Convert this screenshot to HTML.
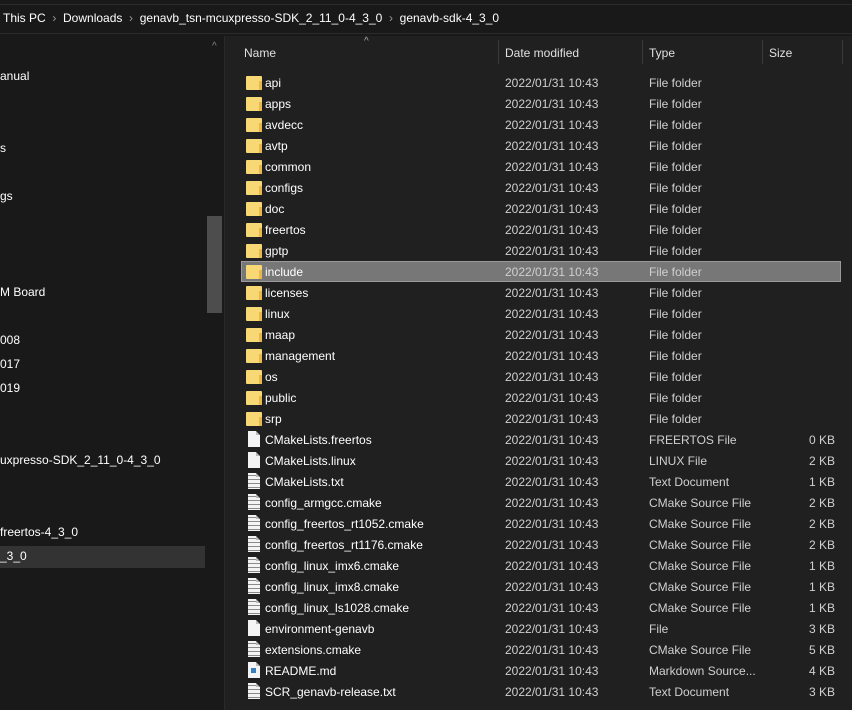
<!DOCTYPE html>
<html><head><style>
*{margin:0;padding:0;box-sizing:border-box}
body{width:852px;height:710px;background:#202020;font-family:"Liberation Sans",sans-serif;font-size:12px;color:#fff;position:relative;overflow:hidden}
.a{position:absolute;white-space:nowrap}
#top{left:0;top:0;width:852px;height:36px;background:#191919;border-top:1px solid #191919}
#topline{left:0;top:4px;width:852px;height:1px;background:#2b2b2b}
#botline{left:0;top:33px;width:852px;height:1px;background:#2b2b2b}
#nav{left:0;top:36px;width:224px;height:674px;background:#191919}
.n{left:0;font-size:12px;color:#fff}
.r{position:absolute;left:241px;width:600px;height:21px}
.r span{position:absolute;top:4px;white-space:nowrap}
.nm{left:24px;color:#fff}
.dt{left:264px;color:#d0d0d0}
.ty{left:408px;color:#d0d0d0}
.sz{right:6px;color:#d0d0d0}
.fd{position:absolute;left:5px;top:4px;width:16px;height:14px;background:#f8d775;border-radius:1px}
.fd:after{content:"";position:absolute;right:0;bottom:0;width:3px;height:9px;background:#e8b94a}
.fl{position:absolute;left:7px;top:2px;width:12px;height:16px;background:#f4f4f4}
.fl:after{content:"";position:absolute;right:0;top:0;border-style:solid;border-width:0 4px 4px 0;border-color:#202020 #202020 #bbb #bbb}
.tx{background:repeating-linear-gradient(#f4f4f4 0 2px,#8a8a8a 2px 3px,#f4f4f4 3px 4px)}
.hd{position:absolute;top:46px;color:#e0e0e0}
.sep{position:absolute;top:40px;width:1px;height:24px;background:#3a3a3a}
</style></head><body>
<div id="top" class="a"></div>
<div id="topline" class="a"></div>
<div id="botline" class="a"></div>
<div class="a" style="left:3px;top:11px;color:#fff;font-size:12px">This PC &nbsp;<span style="color:#999">›</span>&nbsp; Downloads &nbsp;<span style="color:#999">›</span>&nbsp; genavb_tsn-mcuxpresso-SDK_2_11_0-4_3_0 &nbsp;<span style="color:#999">›</span>&nbsp; genavb-sdk-4_3_0</div>
<div id="nav" class="a"></div>
<div class="a" style="left:224px;top:36px;width:1px;height:674px;background:#2a2a2a"></div>
<div class="a" style="left:212px;top:41px;color:#888;font-size:10px">^</div>
<div class="a" style="left:207px;top:216px;width:15px;height:97px;background:#4d4d4d"></div>
<div class="a" style="left:0;top:546px;width:205px;height:22px;background:#333"></div>
<div class="a n" style="top:69px">anual</div>
<div class="a n" style="top:141px">s</div>
<div class="a n" style="top:189px">gs</div>
<div class="a n" style="top:285px">M Board</div>
<div class="a n" style="top:333px">008</div>
<div class="a n" style="top:357px">017</div>
<div class="a n" style="top:381px">019</div>
<div class="a n" style="top:453px">uxpresso-SDK_2_11_0-4_3_0</div>
<div class="a n" style="top:525px">freertos-4_3_0</div>
<div class="a n" style="top:549px">_3_0</div>

<div class="a" style="left:364px;top:36px;color:#aaa;font-size:10px">^</div>
<div class="hd" style="left:244px">Name</div>
<div class="sep" style="left:498px"></div>
<div class="hd" style="left:505px">Date modified</div>
<div class="sep" style="left:642px"></div>
<div class="hd" style="left:649px">Type</div>
<div class="sep" style="left:762px"></div>
<div class="hd" style="left:769px">Size</div>
<div class="sep" style="left:842px"></div>

<div class="r" style="top:72px"><div class="fd"></div><span class="nm">api</span><span class="dt">2022/01/31 10:43</span><span class="ty">File folder</span></div>
<div class="r" style="top:93px"><div class="fd"></div><span class="nm">apps</span><span class="dt">2022/01/31 10:43</span><span class="ty">File folder</span></div>
<div class="r" style="top:114px"><div class="fd"></div><span class="nm">avdecc</span><span class="dt">2022/01/31 10:43</span><span class="ty">File folder</span></div>
<div class="r" style="top:135px"><div class="fd"></div><span class="nm">avtp</span><span class="dt">2022/01/31 10:43</span><span class="ty">File folder</span></div>
<div class="r" style="top:156px"><div class="fd"></div><span class="nm">common</span><span class="dt">2022/01/31 10:43</span><span class="ty">File folder</span></div>
<div class="r" style="top:177px"><div class="fd"></div><span class="nm">configs</span><span class="dt">2022/01/31 10:43</span><span class="ty">File folder</span></div>
<div class="r" style="top:198px"><div class="fd"></div><span class="nm">doc</span><span class="dt">2022/01/31 10:43</span><span class="ty">File folder</span></div>
<div class="r" style="top:219px"><div class="fd"></div><span class="nm">freertos</span><span class="dt">2022/01/31 10:43</span><span class="ty">File folder</span></div>
<div class="r" style="top:240px"><div class="fd"></div><span class="nm">gptp</span><span class="dt">2022/01/31 10:43</span><span class="ty">File folder</span></div>
<div class="r" style="top:261px;background:#777;border:1px solid #9a9a9a"><div class="fd" style="left:4px;top:3px"></div><span class="nm" style="left:23px;top:3px">include</span><span class="dt" style="left:263px;top:3px">2022/01/31 10:43</span><span class="ty" style="left:407px;top:3px">File folder</span></div>
<div class="r" style="top:282px"><div class="fd"></div><span class="nm">licenses</span><span class="dt">2022/01/31 10:43</span><span class="ty">File folder</span></div>
<div class="r" style="top:303px"><div class="fd"></div><span class="nm">linux</span><span class="dt">2022/01/31 10:43</span><span class="ty">File folder</span></div>
<div class="r" style="top:324px"><div class="fd"></div><span class="nm">maap</span><span class="dt">2022/01/31 10:43</span><span class="ty">File folder</span></div>
<div class="r" style="top:345px"><div class="fd"></div><span class="nm">management</span><span class="dt">2022/01/31 10:43</span><span class="ty">File folder</span></div>
<div class="r" style="top:366px"><div class="fd"></div><span class="nm">os</span><span class="dt">2022/01/31 10:43</span><span class="ty">File folder</span></div>
<div class="r" style="top:387px"><div class="fd"></div><span class="nm">public</span><span class="dt">2022/01/31 10:43</span><span class="ty">File folder</span></div>
<div class="r" style="top:408px"><div class="fd"></div><span class="nm">srp</span><span class="dt">2022/01/31 10:43</span><span class="ty">File folder</span></div>
<div class="r" style="top:429px"><div class="fl"></div><span class="nm">CMakeLists.freertos</span><span class="dt">2022/01/31 10:43</span><span class="ty">FREERTOS File</span><span class="sz">0 KB</span></div>
<div class="r" style="top:450px"><div class="fl"></div><span class="nm">CMakeLists.linux</span><span class="dt">2022/01/31 10:43</span><span class="ty">LINUX File</span><span class="sz">2 KB</span></div>
<div class="r" style="top:471px"><div class="fl tx"></div><span class="nm">CMakeLists.txt</span><span class="dt">2022/01/31 10:43</span><span class="ty">Text Document</span><span class="sz">1 KB</span></div>
<div class="r" style="top:492px"><div class="fl tx"></div><span class="nm">config_armgcc.cmake</span><span class="dt">2022/01/31 10:43</span><span class="ty">CMake Source File</span><span class="sz">2 KB</span></div>
<div class="r" style="top:513px"><div class="fl tx"></div><span class="nm">config_freertos_rt1052.cmake</span><span class="dt">2022/01/31 10:43</span><span class="ty">CMake Source File</span><span class="sz">2 KB</span></div>
<div class="r" style="top:534px"><div class="fl tx"></div><span class="nm">config_freertos_rt1176.cmake</span><span class="dt">2022/01/31 10:43</span><span class="ty">CMake Source File</span><span class="sz">2 KB</span></div>
<div class="r" style="top:555px"><div class="fl tx"></div><span class="nm">config_linux_imx6.cmake</span><span class="dt">2022/01/31 10:43</span><span class="ty">CMake Source File</span><span class="sz">1 KB</span></div>
<div class="r" style="top:576px"><div class="fl tx"></div><span class="nm">config_linux_imx8.cmake</span><span class="dt">2022/01/31 10:43</span><span class="ty">CMake Source File</span><span class="sz">1 KB</span></div>
<div class="r" style="top:597px"><div class="fl tx"></div><span class="nm">config_linux_ls1028.cmake</span><span class="dt">2022/01/31 10:43</span><span class="ty">CMake Source File</span><span class="sz">1 KB</span></div>
<div class="r" style="top:618px"><div class="fl"></div><span class="nm">environment-genavb</span><span class="dt">2022/01/31 10:43</span><span class="ty">File</span><span class="sz">3 KB</span></div>
<div class="r" style="top:639px"><div class="fl tx"></div><span class="nm">extensions.cmake</span><span class="dt">2022/01/31 10:43</span><span class="ty">CMake Source File</span><span class="sz">5 KB</span></div>
<div class="r" style="top:660px"><div class="fl"><div style="position:absolute;left:3px;top:6px;width:5px;height:5px;background:#3a7fc0"></div></div><span class="nm">README.md</span><span class="dt">2022/01/31 10:43</span><span class="ty">Markdown Source...</span><span class="sz">4 KB</span></div>
<div class="r" style="top:681px"><div class="fl tx"></div><span class="nm">SCR_genavb-release.txt</span><span class="dt">2022/01/31 10:43</span><span class="ty">Text Document</span><span class="sz">3 KB</span></div>
</body></html>
